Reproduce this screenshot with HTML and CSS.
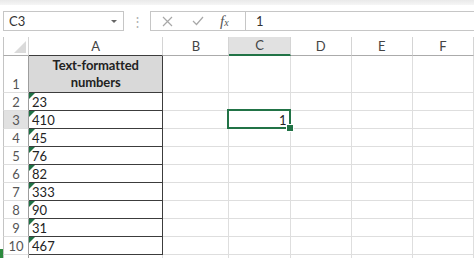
FILE: index.html
```html
<!doctype html>
<html lang="en">
<head>
  <meta charset="utf-8">
  <title>Text-formatted numbers</title>
  <link rel="stylesheet" href="styles.css">
</head>
<body>
  <div class="topstrip"></div>
  <div class="formula-bar">
    <div class="name-box">
      <span>C3</span>
      <span class="caret"></span>
    </div>
    <div class="grip">⋮</div>
    <div class="fx-box">
      <svg class="ico" width="11" height="11" viewBox="0 0 11 11"><path d="M1 1 L10 10 M10 1 L1 10" stroke="#a8a8a8" stroke-width="1.2" fill="none"/></svg>
      <svg class="ico" width="12" height="10" viewBox="0 0 12 10"><path d="M1 5 L4.5 8.5 L11 1" stroke="#a8a8a8" stroke-width="1.2" fill="none"/></svg>
      <span class="fx"><i>f</i><small>x</small></span>
    </div>
    <div class="formula-input">1</div>
  </div>

  <div class="sheet">
    <table class="grid">
      <colgroup>
        <col class="c-rh"><col class="c-a"><col class="c-b"><col class="c-n"><col class="c-n"><col class="c-n"><col class="c-n">
      </colgroup>
      <tr class="head">
        <th class="corner"><span class="tri"></span></th>
        <th>A</th><th>B</th><th class="on">C</th><th>D</th><th>E</th><th>F</th>
      </tr>
      <tr class="tall">
        <th class="rh">1</th>
        <td class="a title">Text-formatted<br>numbers</td><td></td><td></td><td></td><td></td><td></td>
      </tr>
      <tr><th class="rh">2</th><td class="a flag">23</td><td></td><td></td><td></td><td></td><td></td></tr>
      <tr><th class="rh on">3</th><td class="a flag">410</td><td></td><td class="sel">1</td><td></td><td></td><td></td></tr>
      <tr><th class="rh">4</th><td class="a flag">45</td><td></td><td></td><td></td><td></td><td></td></tr>
      <tr><th class="rh">5</th><td class="a flag">76</td><td></td><td></td><td></td><td></td><td></td></tr>
      <tr><th class="rh">6</th><td class="a flag">82</td><td></td><td></td><td></td><td></td><td></td></tr>
      <tr><th class="rh">7</th><td class="a flag">333</td><td></td><td></td><td></td><td></td><td></td></tr>
      <tr><th class="rh">8</th><td class="a flag">90</td><td></td><td></td><td></td><td></td><td></td></tr>
      <tr><th class="rh">9</th><td class="a flag">31</td><td></td><td></td><td></td><td></td><td></td></tr>
      <tr><th class="rh">10</th><td class="a flag">467</td><td></td><td></td><td></td><td></td><td></td></tr>
      <tr><th class="rh"></th><td></td><td></td><td></td><td></td><td></td><td></td></tr>
    </table>
    <span class="tab-mark"></span>
  </div>
</body>
</html>
```

FILE: styles.css
```css
/* base */
* {
  box-sizing: border-box;
}
body {
  margin: 0;
  width: 474px;
  height: 258px;
  overflow: hidden;
  background: #fff;
  font-family: Lato, "Liberation Sans", sans-serif;
  color: #222;
}

/* formula bar */
.topstrip {
  height: 5px;
  background: linear-gradient(#e9e9e9, #f6f6f6);
}
.formula-bar {
  display: flex;
  align-items: center;
  height: 24px;
  margin-top: 4px;
  padding-left: 3px;
}
.name-box {
  width: 121px;
  height: 20px;
  border: 1px solid #c6c6c6;
  display: flex;
  align-items: center;
  justify-content: space-between;
  padding: 0 6px 0 5px;
  font-size: 13px;
  color: #333;
}
.caret {
  width: 0;
  height: 0;
  border-left: 3px solid transparent;
  border-right: 3px solid transparent;
  border-top: 3px solid #666;
}
.grip {
  width: 26px;
  text-align: center;
  color: #b0b0b0;
  font-size: 13px;
}
.fx-box {
  width: 96px;
  height: 20px;
  border: 1px solid #c6c6c6;
  display: flex;
  align-items: center;
  padding-left: 11px;
  gap: 19px;
}
.fx {
  font-family: "Liberation Serif", serif;
  font-size: 15px;
  color: #555;
  margin-left: -3px;
}
.fx small {
  font-size: 10px;
  font-style: italic;
}
.formula-input {
  flex: 1;
  height: 20px;
  border: 1px solid #c6c6c6;
  border-left: none;
  border-right: none;
  padding-left: 10px;
  font-size: 13px;
  line-height: 18px;
  color: #333;
}

/* sheet grid */
.sheet {
  position: relative;
  margin-top: 4px;
  padding-left: 3px;
}
.tab-mark {
  position: absolute;
  left: 0;
  top: 212px;
  width: 3px;
  height: 12px;
  background: #2d8a3e;
}
.grid {
  border-collapse: separate;
  border-spacing: 0;
  table-layout: fixed;
  width: 471px;
  font-size: 13px;
}
.c-rh { width: 26px; }
.c-a { width: 134px; }
.c-b { width: 66px; }
.c-n { width: 61px; }

.grid th, .grid td {
  padding: 0;
  border-right: 1px solid #dedede;
  border-bottom: 1px solid #dedede;
  white-space: nowrap;
  overflow: hidden;
  line-height: 15px;
}
.grid tr { height: 18px; }
.grid tr.head { height: 19px; }
.grid tr.tall { height: 37px; }

.head th {
  font-weight: normal;
  color: #444;
  font-size: 13px;
  border-right-color: #d4d4d4;
  border-bottom-color: #ababab;
}
.head th.on {
  background: #e1e1e1;
  border-bottom: 2px solid #217346;
}
.corner {
  position: relative;
  border-left: 1px solid #c4c4c4;
}
.tri {
  position: absolute;
  right: 2px;
  bottom: 2px;
  border-left: 12px solid transparent;
  border-bottom: 12px solid #dadada;
}
.rh {
  font-weight: normal;
  color: #555;
  font-size: 13px;
  vertical-align: bottom;
  border-left: 1px solid #c4c4c4;
  border-right-color: #9d9d9d !important;
}
.rh.on {
  background: #e1e1e1;
}

/* column A cells */
.grid td {
  vertical-align: bottom;
  padding: 0 3px;
}
.grid td.a {
  border-right: 1px solid #3c3c3c;
  border-bottom: 1px solid #3c3c3c;
  position: relative;
}
.head th:nth-child(2) {
  border-bottom-color: #3c3c3c;
}
.grid td.title {
  background: #d9d9d9;
  font-weight: bold;
  text-align: center;
  line-height: 17px;
  vertical-align: middle;
  letter-spacing: -0.1px;
}
.flag::before {
  content: "";
  position: absolute;
  left: 0;
  top: 0;
  border-top: 6px solid #1e7145;
  border-right: 6px solid transparent;
}

/* selected cell */
.grid td.sel {
  position: relative;
  text-align: right;
  overflow: visible;
}
.sel::after {
  content: "";
  position: absolute;
  left: -2px;
  top: -2px;
  right: -1px;
  bottom: -1px;
  border: 2px solid #217346;
}
.sel::before {
  content: "";
  position: absolute;
  right: -4px;
  bottom: -4px;
  width: 6px;
  height: 6px;
  background: #217346;
  border: 1px solid #fff;
  z-index: 1;
}
```
